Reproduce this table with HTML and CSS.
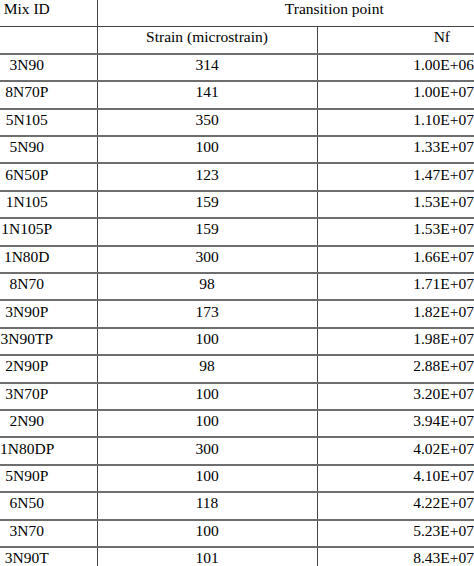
FILE: index.html
```html
<!DOCTYPE html>
<html>
<head>
<meta charset="utf-8">
<link rel="stylesheet" href="styles.css">
</head>
<body>
<table class="data">
  <colgroup>
    <col class="c-id">
    <col class="c-strain">
    <col class="c-nf">
  </colgroup>
  <thead>
    <tr class="h1">
      <th class="id">Mix ID</th>
      <th class="group" colspan="2">Transition point</th>
    </tr>
    <tr class="h2">
      <th class="id"></th>
      <th class="strain">Strain (microstrain)</th>
      <th class="nf-h">Nf</th>
    </tr>
  </thead>
  <tbody>
    <tr><td class="id">3N90</td><td class="strain">314</td><td class="nf">1.00E+06</td></tr>
    <tr><td class="id">8N70P</td><td class="strain">141</td><td class="nf">1.00E+07</td></tr>
    <tr><td class="id">5N105</td><td class="strain">350</td><td class="nf">1.10E+07</td></tr>
    <tr><td class="id">5N90</td><td class="strain">100</td><td class="nf">1.33E+07</td></tr>
    <tr><td class="id">6N50P</td><td class="strain">123</td><td class="nf">1.47E+07</td></tr>
    <tr><td class="id">1N105</td><td class="strain">159</td><td class="nf">1.53E+07</td></tr>
    <tr><td class="id">1N105P</td><td class="strain">159</td><td class="nf">1.53E+07</td></tr>
    <tr><td class="id">1N80D</td><td class="strain">300</td><td class="nf">1.66E+07</td></tr>
    <tr><td class="id">8N70</td><td class="strain">98</td><td class="nf">1.71E+07</td></tr>
    <tr><td class="id">3N90P</td><td class="strain">173</td><td class="nf">1.82E+07</td></tr>
    <tr><td class="id">3N90TP</td><td class="strain">100</td><td class="nf">1.98E+07</td></tr>
    <tr><td class="id">2N90P</td><td class="strain">98</td><td class="nf">2.88E+07</td></tr>
    <tr><td class="id">3N70P</td><td class="strain">100</td><td class="nf">3.20E+07</td></tr>
    <tr><td class="id">2N90</td><td class="strain">100</td><td class="nf">3.94E+07</td></tr>
    <tr><td class="id">1N80DP</td><td class="strain">300</td><td class="nf">4.02E+07</td></tr>
    <tr><td class="id">5N90P</td><td class="strain">100</td><td class="nf">4.10E+07</td></tr>
    <tr><td class="id">6N50</td><td class="strain">118</td><td class="nf">4.22E+07</td></tr>
    <tr><td class="id">3N70</td><td class="strain">100</td><td class="nf">5.23E+07</td></tr>
    <tr><td class="id">3N90T</td><td class="strain">101</td><td class="nf">8.43E+07</td></tr>
  </tbody>
</table>
</body>
</html>
```
FILE: styles.css
```css
html, body {
  margin: 0;
  padding: 0;
  background: #ffffff;
  overflow: hidden;
}
body {
  width: 474px;
  height: 566px;
  font-family: "Liberation Serif", "Times New Roman", serif;
  font-size: 15.5px;
  color: #000000;
}
.data {
  width: 474px;
  border-collapse: collapse;
  table-layout: fixed;
}
.c-id { width: 97px; }
.c-strain { width: 220px; }
.c-nf { width: 157px; }
.data th,
.data td {
  font-weight: normal;
  padding: 0 0 5px 0;
  border-bottom: 2px solid #6e6e6e;
  white-space: nowrap;
  vertical-align: middle;
  line-height: 18px;
}
.data tr { height: 27.4px; }
.data tr.h1 { height: 26px; }
.data tr.h1 th {
  border-bottom: 1.5px solid #444444;
  padding-bottom: 8px;
}
.data tr.h2 th { padding-bottom: 6px; }
.data .id {
  text-align: center;
  padding-right: 43px;
  border-right: 1.5px solid #444444;
}
.data .strain {
  text-align: center;
  border-right: 1.5px solid #444444;
}
.data .group {
  text-align: center;
  padding-left: 97px;
}
.data .nf-h {
  text-align: right;
  padding-right: 24px;
}
.data .nf {
  text-align: right;
  padding-right: 0;
}
```
